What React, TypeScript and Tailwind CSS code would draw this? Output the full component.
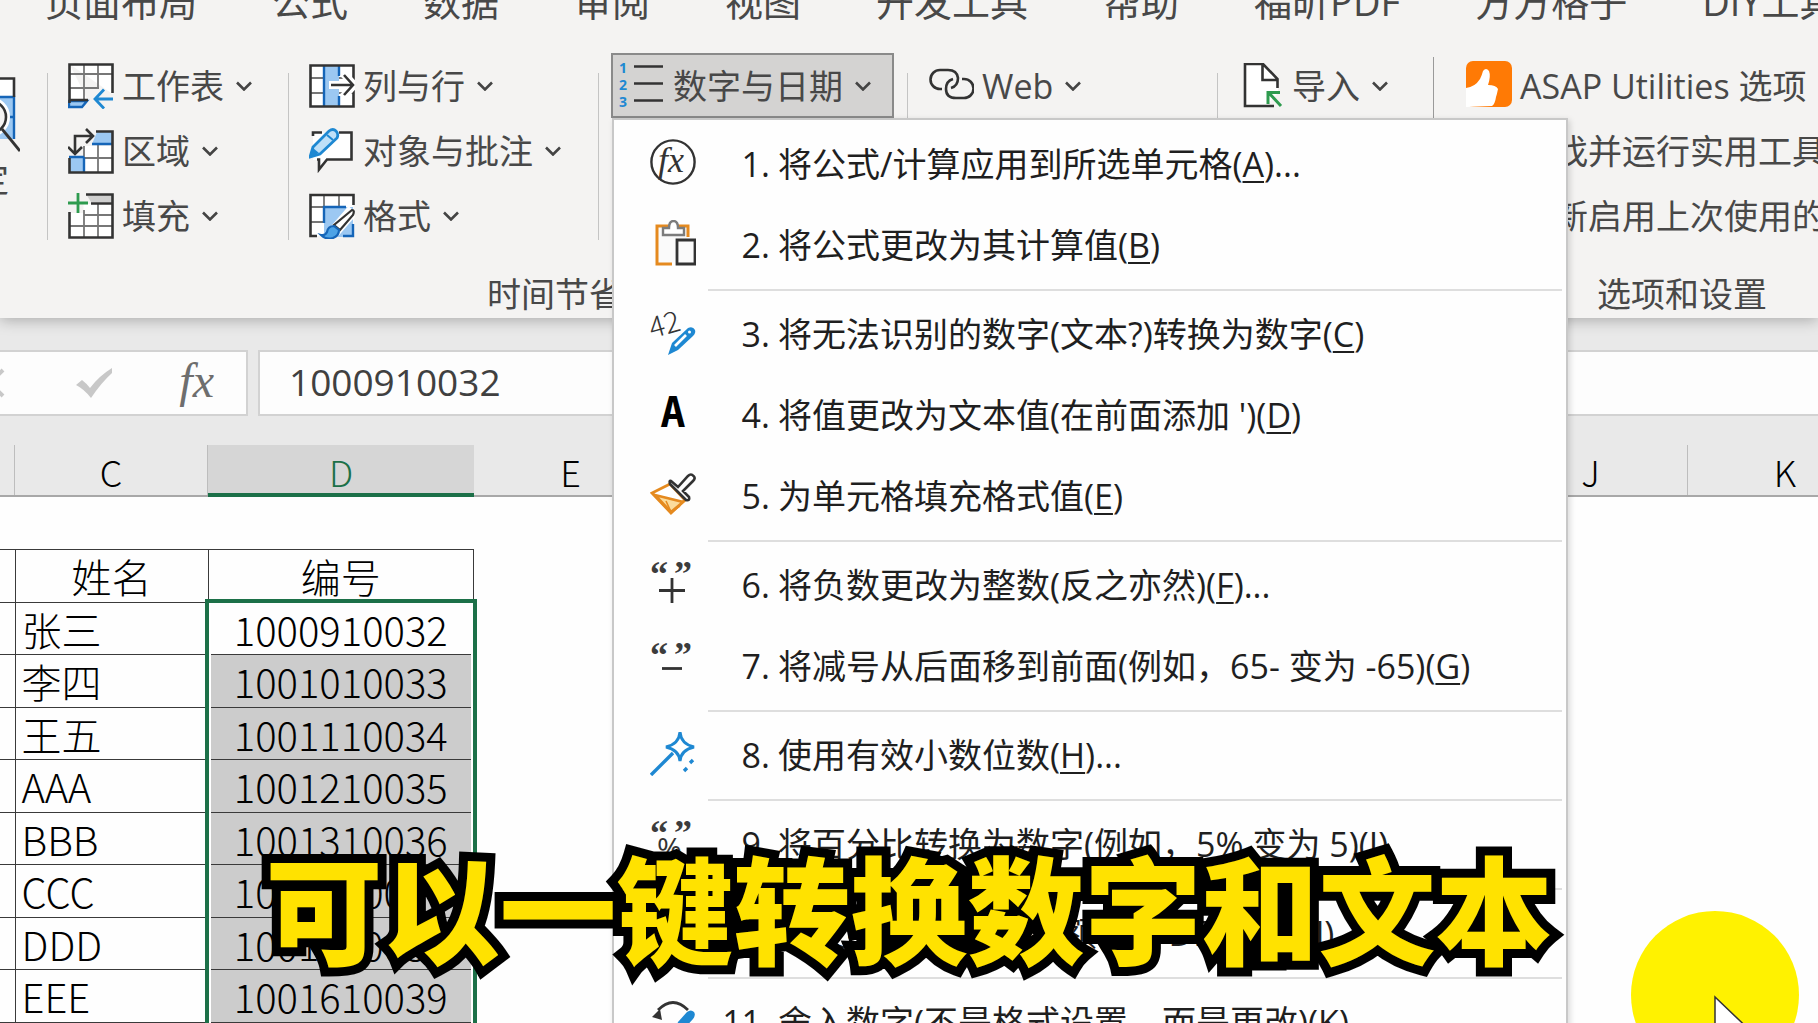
import React from "react";
import { RotateCcw, Search } from "lucide-react";

const UI = "font-['Open_Sans','Noto_Sans_CJK_SC',sans-serif]";
const CELL = "font-['Noto_Sans_CJK_SC',sans-serif]";

const DARK = "#333333";
const BLUE = "#1e88d2";
const PALE = "#9cc8f2";

function Svg({ children, className = "" }: { children: React.ReactNode; className?: string }) {
  return (
    <svg viewBox="0 0 46 46" className={`size-[46px] shrink-0 ${className}`} fill="none" aria-hidden="true">
      {children}
    </svg>
  );
}

function Chevron() {
  return (
    <svg viewBox="0 0 16 10" className="ml-1 h-[10px] w-4 shrink-0" fill="none" stroke="#444" strokeWidth="2.6" aria-hidden="true">
      <path d="M1 1.500 8 8.500 15 1.500" />
    </svg>
  );
}

/* ---------- ribbon icons ---------- */

const SheetIcon = () => (
  <Svg>
    <path d="M1.500 1h43v30M1.500 1v36h18" fill="#fff" />
    <path d="M16 1v37M30 1v24M1 11h43M1 25h30" stroke="#777" strokeWidth="1.800" />
    <path d="M1 38h18l-5 6H1z" fill={PALE} stroke="#1565b8" strokeWidth="2.400" />
    <path d="M1.500 40V1.500h43V30M1 37h19" stroke={DARK} strokeWidth="2.600" />
    <path d="M45 36H28M36 26.500 27 36l9 9.500" stroke={BLUE} strokeWidth="2.800" />
  </Svg>
);

const RangeIcon = () => (
  <Svg>
    <path d="M17 18h28v27H17z" fill="#fff" />
    <path d="M29 4h16v12H24z" fill={PALE} />
    <path d="M1 30h15v14H1z" fill={PALE} />
    <path d="M30 16v28M16 18v26M16 30h28" stroke="#777" strokeWidth="1.800" />
    <path d="M24 16h20M16 29v15M1 29h15" stroke="#1565b8" strokeWidth="2.400" />
    <path d="M28 3.500h16.500v41H1.500V30" stroke={DARK} strokeWidth="2.600" />
    <path d="M24 8H7v17M18 1l7 7-7 7M0 19l7 7 7-7" stroke={DARK} strokeWidth="2.600" />
  </Svg>
);

const FillIcon = () => (
  <Svg>
    <path d="M1.500 20h14v-9H44v34H1.500z" fill="#fff" />
    <path d="M18 1h26v8H23z" fill="#cfcfcf" />
    <path d="M16 17v28M30 11v34M16 22h28M1 33h43" stroke="#777" strokeWidth="1.800" />
    <path d="M18 1.500h26.500v43h-43V19M23 10.500h21" stroke={DARK} strokeWidth="2.600" />
    <path d="M10 0v20M0 10h20" stroke="#2e9b4f" strokeWidth="2.800" />
  </Svg>
);

const ColumnIcon = () => (
  <Svg>
    <path d="M1.500 3h43v40h-43z" fill="#fff" />
    <path d="M15 3h15v40H15z" fill={PALE} />
    <path d="M1 15h14M1 30h14M30 30h14M30 15h14" stroke="#777" strokeWidth="1.800" />
    <path d="M15 3v40M30 3v10M30 33v10" stroke="#1565b8" strokeWidth="2.400" />
    <path d="M1.500 2.500h43v41h-43z" stroke={DARK} strokeWidth="2.600" />
    <path d="M20 22h24M34 10l11 12-11 12" stroke="#fff" strokeWidth="8" />
    <path d="M22 22h22M35 12l9 10-9 10" stroke={DARK} strokeWidth="2.600" />
  </Svg>
);

const CommentIcon = () => (
  <Svg>
    <path d="M4 5h38v27H18l-8 9v-9H4z" fill="#fff" />
    <path d="M4 8V4.500h9M30 4.500h12.500v27H18l-8 10v-10H8" stroke={DARK} strokeWidth="2.600" />
    <path d="m1 29 3-10L20 3q4-3 7 0t1 7L11 26z" fill="#bfe0f8" stroke={BLUE} strokeWidth="2.800" />
    <path d="m1 29 3-9 6 5z" fill={BLUE} />
    <path d="m18 7 6 5" stroke={BLUE} strokeWidth="2" />
  </Svg>
);

const FormatIcon = () => (
  <Svg>
    <path d="M1.500 2h43v41h-43z" fill="#fff" />
    <path d="M15 14h29v30H15z" fill={PALE} />
    <path d="M15 2v12M30 2v12M1 14h14M1 29h14" stroke="#777" strokeWidth="1.800" />
    <path d="M15 30V14h22M34 43h10V31" stroke="#1565b8" strokeWidth="2.400" />
    <path d="M44.500 12V2h-43v41H8" stroke={DARK} strokeWidth="2.600" />
    <path d="M44 17 24 40" stroke="#fff" strokeWidth="12" />
    <path d="M43 17q3 0 1 5L31 37l-6-5z" fill="#fff" stroke={DARK} strokeWidth="2.200" />
    <path d="M25 33q-6 0-7 6-2 4-6 3 5 5 12 3 6-2 6-8z" fill="#4ea3e6" stroke="#1565b8" strokeWidth="2.200" />
  </Svg>
);

const NumberListIcon = () => (
  <svg viewBox="0 0 46 46" className="size-[46px] shrink-0" fill="none" aria-hidden="true">
    <g className="font-['Open_Sans',sans-serif] text-[14px] font-bold" fill={BLUE}>
      <text x="0" y="10">1</text>
      <text x="0" y="27">2</text>
      <text x="0" y="44">3</text>
    </g>
    <path d="M15 3.500h29M15 20.500h29M15 37.500h29" stroke={DARK} strokeWidth="2.600" />
  </svg>
);

const LinkIcon = () => (
  <Svg>
    <path
      d="M14 26H12A9.500 9.500 0 0 1 12 7h8q9 0 10 8 0 8-7 10M34 16h2a9.500 9.500 0 0 1 0 19h-8q-10 0-10-9 0-8 7-10"
      stroke={DARK}
      strokeWidth="2.600"
    />
  </Svg>
);

const ImportIcon = () => (
  <Svg>
    <path d="M7 1h18l15 15v14L28 43H7z" fill="#fff" />
    <path d="M36 43H7V1h18l14.500 15V25M24.500 1.500V17H39" stroke={DARK} strokeWidth="2.600" />
    <path d="M30 41V29.500h12M31 30l12 13" stroke="#2e9b4f" strokeWidth="3" />
  </Svg>
);

const ThumbIcon = () => (
  <Svg className="mb-1">
    <rect width="46" height="46" rx="7" fill="#ff7a05" />
    <path d="M0 46V27q9-1 14-9 2-4 3-8 3-4 6 0 2 5-1 14 8 0 10 4-1 5-2 8-1 7-4 9z" fill="#fff" />
  </Svg>
);

/* ---------- menu icons ---------- */

const FxCircleIcon = () => (
  <Svg>
    <circle cx="23" cy="23" r="21.600" stroke={DARK} strokeWidth="2.400" />
    <text x="8" y="33" className="font-['Liberation_Serif',serif] text-[36px] italic" fill={DARK}>fx</text>
  </Svg>
);

const PasteIcon = () => (
  <Svg>
    <path d="M22 44H7V6h31v11" fill="#fafafa" stroke="#e58a1f" strokeWidth="3" />
    <path d="M13 15V8h6q0-7 4.500-7T28 8h6v7z" fill="#fff" stroke="#7c7c7c" strokeWidth="2.400" />
    <path d="M27 20h18v24H27z" fill="#fafafa" stroke={DARK} strokeWidth="2.800" />
  </Svg>
);

const RecognizeIcon = () => (
  <Svg className="overflow-visible">
    <text x="0" y="27" transform="rotate(-16 10 20)" className="font-['Noto_Sans_CJK_SC',sans-serif] text-[29px] font-light" fill="#333">42</text>
    <path d="m18 46 4-12 16-15q5-2 7 2 1 3-2 6L28 41z" fill={BLUE} />
    <path d="m25 37 11-11" stroke="#fff" strokeWidth="2.600" />
    <circle cx="39.500" cy="23" r="1.500" fill="#fff" />
  </Svg>
);

const LetterIcon = () => (
  <span className="w-[46px] shrink-0 text-center font-['DejaVu_Sans_Mono',monospace] text-[42px] leading-[46px] font-bold text-black">A</span>
);

const BrushIcon = () => (
  <Svg>
    <path d="M20 13 2 22l19 20 14-13z" fill="#fff" stroke="#e58a1f" strokeWidth="2.800" />
    <path d="m5 24 16 17 12-10z" fill="#fbdc9c" stroke="#e58a1f" strokeWidth="2.600" />
    <path d="m16 30 5 11 9-6" stroke="#e58a1f" strokeWidth="1.600" />
    <path d="m21 10 7 6L38 5q3-3 5.500 0 2.500 2-.5 5L33 20l6 6q1 4-3 3L20 13q-1-4 1-3z" fill="#fff" stroke={DARK} strokeWidth="2.600" />
  </Svg>
);

function QuoteIcon({ sign }: { sign: "plus" | "minus" | "percent" }) {
  return (
    <Svg>
      <g className="font-['Liberation_Serif',serif] text-[36px] font-bold" fill="#3c3c3c">
        <text x="0" y="26">“</text>
        <text x="24" y="26">”</text>
      </g>
      {sign === "plus" && <path d="M22 18v25M9 30.500h26" stroke={DARK} strokeWidth="2.800" />}
      {sign === "minus" && <path d="M12 27.500h20" stroke={DARK} strokeWidth="2.800" />}
      {sign === "percent" && (
        <text x="7" y="40" className="font-['Open_Sans',sans-serif] text-[30px]" fill={DARK}>%</text>
      )}
    </Svg>
  );
}

const WandIcon = () => (
  <Svg>
    <path d="m1 45 22-22" stroke={BLUE} strokeWidth="3.400" />
    <path d="M30 2q1 12 14 15-13 3-14 14-1-11-14-14Q29 14 30 2z" fill="#fff" stroke={BLUE} strokeWidth="3" />
    <path d="m34 41 3-3M40 33l3-3" stroke={BLUE} strokeWidth="3.400" />
  </Svg>
);

const SpellIcon = () => (
  <Svg>
    <path d="M8 10h30M8 22h30M8 34h18" stroke={DARK} strokeWidth="2.400" />
  </Svg>
);

const RoundIcon = () => (
  <Svg>
    <path d="M8 13q15-15 30 0M38 33q-15 15-30 0" stroke={DARK} strokeWidth="2.800" />
    <path d="m2 20 8-8 2 11z" fill={DARK} />
    <path d="m24 36 4-11 9-10q4-3 7 0 2 3-1 7L33 33z" fill={BLUE} />
  </Svg>
);

/* ---------- data ---------- */

const tabs = ["页面布局", "公式", "数据", "审阅", "视图", "开发工具", "帮助", "福昕PDF", "方方格子", "DIY工具箱"];

type Item = { label: string; hotkey: string; more?: boolean; icon: React.ReactNode };

const groups: Item[][] = [
  [
    { label: "将公式/计算应用到所选单元格", hotkey: "A", more: true, icon: <FxCircleIcon /> },
    { label: "将公式更改为其计算值", hotkey: "B", icon: <PasteIcon /> },
  ],
  [
    { label: "将无法识别的数字(文本?)转换为数字", hotkey: "C", icon: <RecognizeIcon /> },
    { label: "将值更改为文本值(在前面添加 ')", hotkey: "D", icon: <LetterIcon /> },
    { label: "为单元格填充格式值", hotkey: "E", icon: <BrushIcon /> },
  ],
  [
    { label: "将负数更改为整数(反之亦然)", hotkey: "F", more: true, icon: <QuoteIcon sign="plus" /> },
    { label: "将减号从后面移到前面(例如，65- 变为 -65)", hotkey: "G", icon: <QuoteIcon sign="minus" /> },
  ],
  [{ label: "使用有效小数位数", hotkey: "H", more: true, icon: <WandIcon /> }],
  [{ label: "将百分比转换为数字(例如，5% 变为 5)", hotkey: "I", icon: <QuoteIcon sign="percent" /> }],
  [{ label: "用文字拼写数字/金额(EN, DE, FR...)", hotkey: "J", icon: <SpellIcon /> }],
  [{ label: "舍入数字(不是格式设置，而是更改)", hotkey: "K", icon: <RoundIcon /> }],
];

const rows: [string, string][] = [
  ["张三", "1000910032"],
  ["李四", "1001010033"],
  ["王五", "1001110034"],
  ["AAA", "1001210035"],
  ["BBB", "1001310036"],
  ["CCC", "1001410037"],
  ["DDD", "1001510038"],
  ["EEE", "1001610039"],
];

/* ---------- parts ---------- */

function Command({ icon, label, chevron = true }: { icon: React.ReactNode; label: string; chevron?: boolean }) {
  return (
    <button type="button" className="flex h-[65px] items-center gap-2 whitespace-nowrap">
      {icon}
      <span>{label}</span>
      {chevron && <Chevron />}
    </button>
  );
}

function Divider() {
  return <div className="mt-5 mb-2 w-px shrink-0 bg-[#c4c4c4]" />;
}

function NumbersMenu() {
  let n = 0;
  return (
    <div
      role="menu"
      className="absolute top-full left-px z-10 w-[956px] border-2 border-[#c8c8c8] bg-[#fefefe] pt-1 text-[#1f1f1f] shadow-[2px_2px_6px_rgba(0,0,0,0.15)]"
    >
      {groups.map((group, g) => (
        <React.Fragment key={g}>
          {g > 0 && (
            <div role="separator" className="mr-1 ml-[94px] py-[3px]">
              <div className="h-0.5 bg-[#dedede]" />
            </div>
          )}
          {group.map((item) => {
            n += 1;
            return (
              <button
                key={item.hotkey}
                type="button"
                role="menuitem"
                className="flex h-[81px] w-full items-center pb-0.5 pl-9 text-left whitespace-nowrap"
              >
                <span className="mb-1 flex shrink-0">{item.icon}</span>
                <span className="mr-2 w-[74px] shrink-0 text-right">{n}.</span>
                <span>
                  {item.label}(<span className="underline decoration-2 underline-offset-4">{item.hotkey}</span>)
                  {item.more && "..."}
                </span>
              </button>
            );
          })}
        </React.Fragment>
      ))}
    </div>
  );
}

function Ribbon() {
  return (
    <section className="relative z-20 flex h-[297px] shrink-0 bg-[#f4f3f2] pt-8 text-[34px] leading-[44px] text-[#484848] shadow-[0_2px_14px_rgba(0,0,0,0.28)]">
      <div className="flex shrink-0 flex-col">
        <div className="flex h-[195px]">
          <button type="button" className="flex w-[47px] shrink-0 flex-col items-end overflow-hidden pt-6">
            <svg viewBox="0 0 60 80" className="mr-[27px] h-20 w-[60px] shrink-0" fill="none" aria-hidden="true">
              <path d="M0 2h54v60H0z" fill="#fff" />
              <path d="M0 20h54v42H0z" fill={PALE} />
              <path d="M0 20h54v42M46 40h8" stroke="#1565b8" strokeWidth="2.400" />
              <path d="M0 1.500h54V20" stroke={DARK} strokeWidth="2.600" />
              <circle cx="30" cy="40" r="16" fill="#f4f3f2" stroke="#fff" strokeWidth="8" />
              <circle cx="30" cy="40" r="16" fill="#f4f3f2" stroke={DARK} strokeWidth="2.600" />
              <path d="m42 52 18 22" stroke={DARK} strokeWidth="2.800" />
            </svg>
            <span className="mr-[38px] whitespace-nowrap">选定</span>
          </button>
          <Divider />
          <div className="w-[240px] shrink-0 pl-5">
            <Command icon={<SheetIcon />} label="工作表" />
            <Command icon={<RangeIcon />} label="区域" />
            <Command icon={<FillIcon />} label="填充" />
          </div>
          <Divider />
          <div className="w-[309px] shrink-0 pl-5">
            <Command icon={<ColumnIcon />} label="列与行" />
            <Command icon={<CommentIcon />} label="对象与批注" />
            <Command icon={<FormatIcon />} label="格式" />
          </div>
          <Divider />
          <div className="w-[308px] shrink-0 pl-3">
            <div className="relative w-[283px]">
              <button
                type="button"
                aria-haspopup="menu"
                aria-expanded="true"
                className="flex h-[65px] w-full items-center gap-2 border-2 border-[#8a8a8a] bg-[#d4d3d2] pl-1.5 whitespace-nowrap"
              >
                <NumberListIcon />
                <span>数字与日期</span>
                <Chevron />
              </button>
              <NumbersMenu />
            </div>
          </div>
          <Divider />
          <div className="w-[309px] shrink-0 pl-5">
            <Command icon={<LinkIcon />} label="Web" />
          </div>
          <Divider />
          <div className="w-[215px] shrink-0 pl-5">
            <Command icon={<ImportIcon />} label="导入" />
          </div>
        </div>
        <p className="pt-6 pl-[487px]">时间节省工具</p>
      </div>
      <div className="mt-1 mb-3 w-px shrink-0 bg-[#9a9a9a]" />
      <div className="min-w-0 flex-1 overflow-hidden pl-8">
        <div className="h-[195px]">
          <Command icon={<ThumbIcon />} label="ASAP Utilities 选项" />
          <Command icon={<Search className="size-[46px] shrink-0 p-1" />} label="查找并运行实用工具" chevron={false} />
          <Command icon={<RotateCcw className="size-[46px] shrink-0 p-1" />} label="重新启用上次使用的工具" chevron={false} />
        </div>
        <p className="pt-6 pl-[131px] whitespace-nowrap">选项和设置</p>
      </div>
    </section>
  );
}

function FormulaBar() {
  return (
    <div className="flex h-[127px] shrink-0 gap-2.5 bg-[#e9e9e9] pt-8 pb-[29px]">
      <div className="flex w-[248px] shrink-0 items-center justify-end overflow-hidden border-2 border-l-0 border-[#d2d2d2] bg-[#fdfdfd] pr-8">
        <button type="button" aria-label="取消" className="mr-[70px] shrink-0">
          <svg viewBox="0 0 30 30" className="size-[30px]" stroke="#c8c8c8" strokeWidth="4" aria-hidden="true">
            <path d="m2 2 26 26M28 2 2 28" />
          </svg>
        </button>
        <button type="button" aria-label="输入" className="mr-[66px] shrink-0">
          <svg viewBox="0 0 38 30" className="h-[30px] w-[38px]" fill="#c8c8c8" aria-hidden="true">
            <path d="m1 17 6-5q4 3 8 8Q24 8 37 0v5Q26 15 16 30 9 21 1 17z" />
          </svg>
        </button>
        <button
          type="button"
          aria-label="插入函数"
          className="shrink-0 pb-1 font-['Liberation_Serif',serif] text-[48px] leading-[50px] text-[#6e6e6e] italic"
        >
          fx
        </button>
      </div>
      <input
        aria-label="编辑栏"
        readOnly
        value="1000910032"
        className="min-w-0 flex-1 border-2 border-r-0 border-[#d2d2d2] bg-[#fdfdfd] pb-0.5 pl-[29px] text-[37px] text-[#404040] outline-none"
      />
    </div>
  );
}

function Grid() {
  const head = "border-r border-[#bdbdbd]";
  return (
    <div className={`${CELL} min-h-0 flex-1 bg-[#fefefe] font-light text-black`}>
      <div className="flex h-[52px] border-b-2 border-[#a8a8a8] bg-[#e9e9e9] text-center text-[36px] leading-[52px]">
        <div className={`${head} w-[15px] shrink-0`} />
        <div className={`${head} w-[193px] shrink-0`}>C</div>
        <div className="-mb-0.5 w-[266px] shrink-0 border-b-4 border-[#1c7048] bg-[#d6d6d6] text-[#1c7048]">D</div>
        <div className={`${head} w-[194px] shrink-0`}>E</div>
        <div className={`${head} w-[206px] shrink-0`}>F</div>
        <div className={`${head} w-[206px] shrink-0`}>G</div>
        <div className={`${head} w-[206px] shrink-0`}>H</div>
        <div className={`${head} w-[208px] shrink-0`}>I</div>
        <div className={`${head} w-[194px] shrink-0`}>J</div>
        <div className="w-[194px] shrink-0">K</div>
      </div>
      <div className="relative mt-[52px] w-[474px]">
        <table className="w-full table-fixed border-collapse text-[40px] leading-[44px]">
          <colgroup>
            <col className="w-[15px]" />
            <col className="w-[193px]" />
            <col />
          </colgroup>
          <thead>
            <tr className="h-[53px]">
              <td className="border border-l-0 border-[#3a3a3a] p-0" />
              <th scope="col" className="border border-[#3a3a3a] p-0 font-light">姓名</th>
              <th scope="col" className="border border-[#3a3a3a] p-0 font-light">编号</th>
            </tr>
          </thead>
          <tbody>
            {rows.map(([name, id], i) => (
              <tr key={id} className="h-[52px] even:h-[53px]">
                <td className="border border-l-0 border-[#3a3a3a] p-0" />
                <td className="border border-[#3a3a3a] p-0 pl-1.5">{name}</td>
                <td className={`border border-[#3a3a3a] p-0 text-center ${i > 0 ? "bg-[#cccccc]" : ""}`}>{id}</td>
              </tr>
            ))}
          </tbody>
        </table>
        <div className="pointer-events-none absolute top-[50px] -right-[3px] -bottom-5 left-[205px] border-4 border-[#1c7048]">
          <div className="h-full border-x-2 border-white" />
        </div>
      </div>
    </div>
  );
}

export default function App() {
  return (
    <main className={`${UI} relative flex h-screen flex-col overflow-hidden bg-[#fefefe]`}>
      <nav className="relative z-30 flex h-[21px] shrink-0 items-end gap-[75px] overflow-hidden bg-[#f4f3f2] pb-px pl-[45px] text-[38px] leading-[38px] text-[#484848]">
        {tabs.map((tab) => (
          <a key={tab} href="#" className="shrink-0 whitespace-nowrap">
            {tab}
          </a>
        ))}
      </nav>
      <Ribbon />
      <FormulaBar />
      <Grid />

      <svg viewBox="0 0 168 168" className="absolute right-[19px] -bottom-[56px] z-30 size-[168px] overflow-visible" aria-hidden="true">
        <circle cx="84" cy="84" r="84" fill="#fff200" />
        <path d="M84 86v60l14-14 10 22 10-5-10-21h20z" fill="#fff" stroke="#333" strokeWidth="1.500" />
      </svg>

      <p className="absolute inset-x-0 bottom-[33px] z-40 text-center font-['Noto_Sans_CJK_SC',sans-serif] text-[117px] leading-[170px] font-black whitespace-nowrap text-[#ffe200] [-webkit-text-stroke:18px_#000] [paint-order:stroke_fill]">
        可以一键转换数字和文本
      </p>
    </main>
  );
}
